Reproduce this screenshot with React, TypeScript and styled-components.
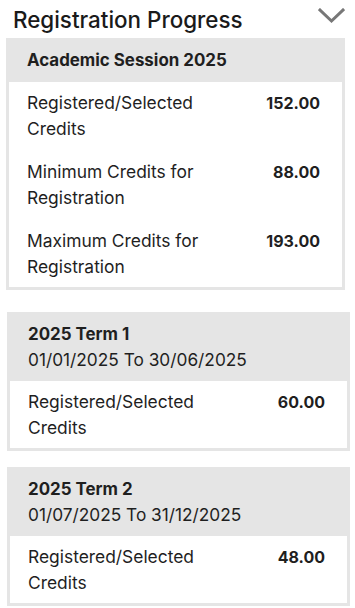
import styled, { createGlobalStyle } from "styled-components";
import { FC } from "react";

const GlobalStyle = createGlobalStyle`
    body {
        margin: 0;
        background: #fff;
        font-family: Inter, "Noto Sans", sans-serif;
        color: #1f1f1f;
    }
`;

interface RowItem {
    label: string;
    value: string;
}

interface CardInterface {
    title: string;
    dates?: string;
    rows: RowItem[];
    left: number;
    right: number;
    below: number;
}

const Page = styled.div`
    width: 355px;
    padding-top: 5px;
`;

const TopBar = styled.div`
    display: flex;
    align-items: center;
    justify-content: space-between;
    padding: 0 10px 0 13px;
    height: 28px;
    margin-bottom: 5px;
`;

const Heading = styled.h1`
    margin: 0;
    font-size: 22.4px;
    font-weight: 500;
    color: #1a1a1a;
`;

const Chevron = styled.svg`
    width: 27px;
    height: 16px;
    margin-top: -6px;
`;

const Card = styled.section<{ $left: number; $right: number; $below: number }>`
    margin: 0 ${(p) => p.$right}px ${(p) => p.$below}px ${(p) => p.$left}px;
    border: 3px solid #e5e5e5;
    border-top: none;
    background: #fff;
`;

const Header = styled.div`
    background: #e5e5e5;
    padding: 10px 18px 9px 18px;
    line-height: 25px;
    font-size: 17.3px;
`;

const HeaderTitle = styled.div`
    font-weight: 700;
    font-size: 16.9px;
`;

const HeaderDates = styled.div`
    font-weight: 400;
`;

const Body = styled.div`
    display: flex;
    flex-direction: column;
    gap: 17px;
    padding: 8px 22px 7px 18px;
`;

const Row = styled.div`
    display: flex;
    justify-content: space-between;
    align-items: flex-start;
    font-size: 17.4px;
    line-height: 26px;
`;

const Label = styled.div`
    width: 205px;
`;

const Value = styled.div`
    font-weight: 700;
    font-size: 16px;
    text-align: right;
`;

const ProgressCard: FC<CardInterface> = ({ title, dates, rows, left, right, below }) => {
    return (
        <Card $left={left} $right={right} $below={below}>
            <Header>
                <HeaderTitle>{title}</HeaderTitle>
                {dates && <HeaderDates>{dates}</HeaderDates>}
            </Header>
            <Body>
                {rows.map((r) => (
                    <Row key={r.label}>
                        <Label>{r.label}</Label>
                        <Value>{r.value}</Value>
                    </Row>
                ))}
            </Body>
        </Card>
    );
};

const App: FC = () => {
    return (
        <Page>
            <GlobalStyle />
            <TopBar>
                <Heading>Registration Progress</Heading>
                <Chevron viewBox="0 0 27 16" fill="none">
                    <polyline
                        points="2,2 13.5,13 25,2"
                        stroke="#777"
                        strokeWidth="3"
                        strokeLinecap="square"
                    />
                </Chevron>
            </TopBar>
            <ProgressCard
                title="Academic Session 2025"
                left={6}
                right={10}
                below={22}
                rows={[
                    { label: "Registered/Selected Credits", value: "152.00" },
                    { label: "Minimum Credits for Registration", value: "88.00" },
                    { label: "Maximum Credits for Registration", value: "193.00" },
                ]}
            />
            <ProgressCard
                title="2025 Term 1"
                dates="01/01/2025 To 30/06/2025"
                left={7}
                right={5}
                below={16}
                rows={[{ label: "Registered/Selected Credits", value: "60.00" }]}
            />
            <ProgressCard
                title="2025 Term 2"
                dates="01/07/2025 To 31/12/2025"
                left={7}
                right={5}
                below={0}
                rows={[{ label: "Registered/Selected Credits", value: "48.00" }]}
            />
        </Page>
    );
};

export default App;
